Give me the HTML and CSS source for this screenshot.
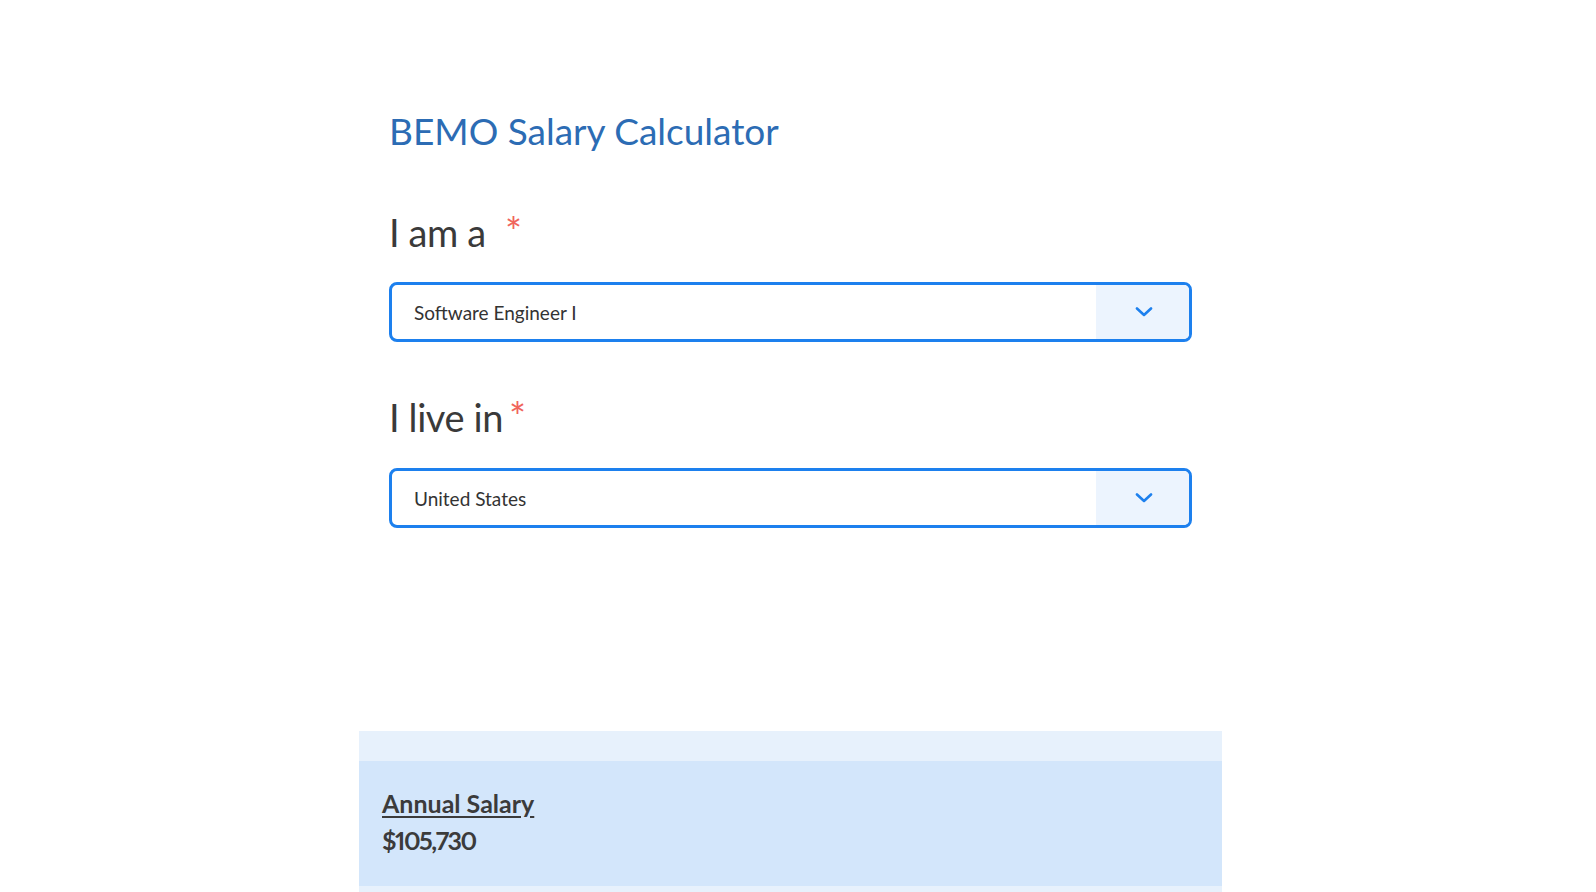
FILE: index.html
```html
<!doctype html>
<html lang="en">
<head>
<meta charset="UTF-8">
<title>BEMO Salary Calculator</title>
<link rel="stylesheet" href="styles.css">
</head>
<body>
<div class="page">
	<div class="form">
		<h1 class="title">BEMO Salary Calculator</h1>

		<div class="field-label">I am a <span class="req req-gap">*</span></div>
		<div class="select">
			<span class="select-value">Software Engineer I</span>
			<span class="select-btn">
				<svg width="18" height="10" viewBox="0 0 18 10"><path d="M2 1.5 L9 8 L16 1.5" fill="none" stroke="#1d80ee" stroke-width="2.6" stroke-linecap="round" stroke-linejoin="round"/></svg>
			</span>
		</div>

		<div class="field-label field-label-2">I live in<span class="req req-tight">*</span></div>
		<div class="select select-2">
			<span class="select-value">United States</span>
			<span class="select-btn">
				<svg width="18" height="10" viewBox="0 0 18 10"><path d="M2 1.5 L9 8 L16 1.5" fill="none" stroke="#1d80ee" stroke-width="2.6" stroke-linecap="round" stroke-linejoin="round"/></svg>
			</span>
		</div>
	</div>

	<div class="result">
		<div class="result-head"></div>
		<div class="result-body">
			<a class="result-name" href="#">Annual Salary</a>
			<div class="result-value">$105,730</div>
		</div>
		<div class="result-foot"></div>
	</div>
</div>
</body>
</html>
```

FILE: styles.css
```css
*{ margin:0; padding:0; box-sizing:border-box;}
body{
	padding-right:15px;
	font-family:Lato,"Open Sans",sans-serif;
	color:#3b3b3b;
	background:#fff;
}
a{color:inherit;}
.page{
	width:863px;
	margin:0 auto;
}
.form{
	padding:109px 30px 0 30px;
}
.title{
	font-size:37px;
	line-height:43px;
	font-weight:400;
	color:#2c6cb4;
}
.field-label{
	margin-top:57px;
	font-size:38px;
	line-height:46px;
	letter-spacing:-0.4px;
	color:#3a3a3a;
}
.field-label-2{
	margin-top:52px;
}
.req{
	color:#f0645c;
	font-size:40px;
}
.req-gap{
	margin-left:10px;
}
.req-tight{
	margin-left:6px;
}
.select{
	display:flex;
	height:60px;
	margin-top:27px;
	border:3px solid #1d80ee;
	border-radius:8px;
	overflow:hidden;
}
.select-2{
	margin-top:28px;
}
.select-value{
	flex:1;
	display:flex;
	align-items:center;
	padding-left:22px;
	font-size:19px;
	color:#333;
}
.select-btn{
	width:93px;
	display:flex;
	align-items:center;
	justify-content:center;
	padding-left:2px;
	background:#ecf4fe;
}
.result{
	margin-top:203px;
	background:#e7f1fc;
}
.result-head{
	height:30px;
}
.result-body{
	padding:24px 23px 27px;
	background:#d3e6fb;
	font-size:25px;
	line-height:37px;
	font-weight:700;
}
.result-name{
	text-decoration:underline;
	text-underline-offset:3px;
}
.result-value{
	font-variant-numeric:proportional-nums;
	letter-spacing:-1.5px;
}
.result-foot{
	height:10px;
}
```
